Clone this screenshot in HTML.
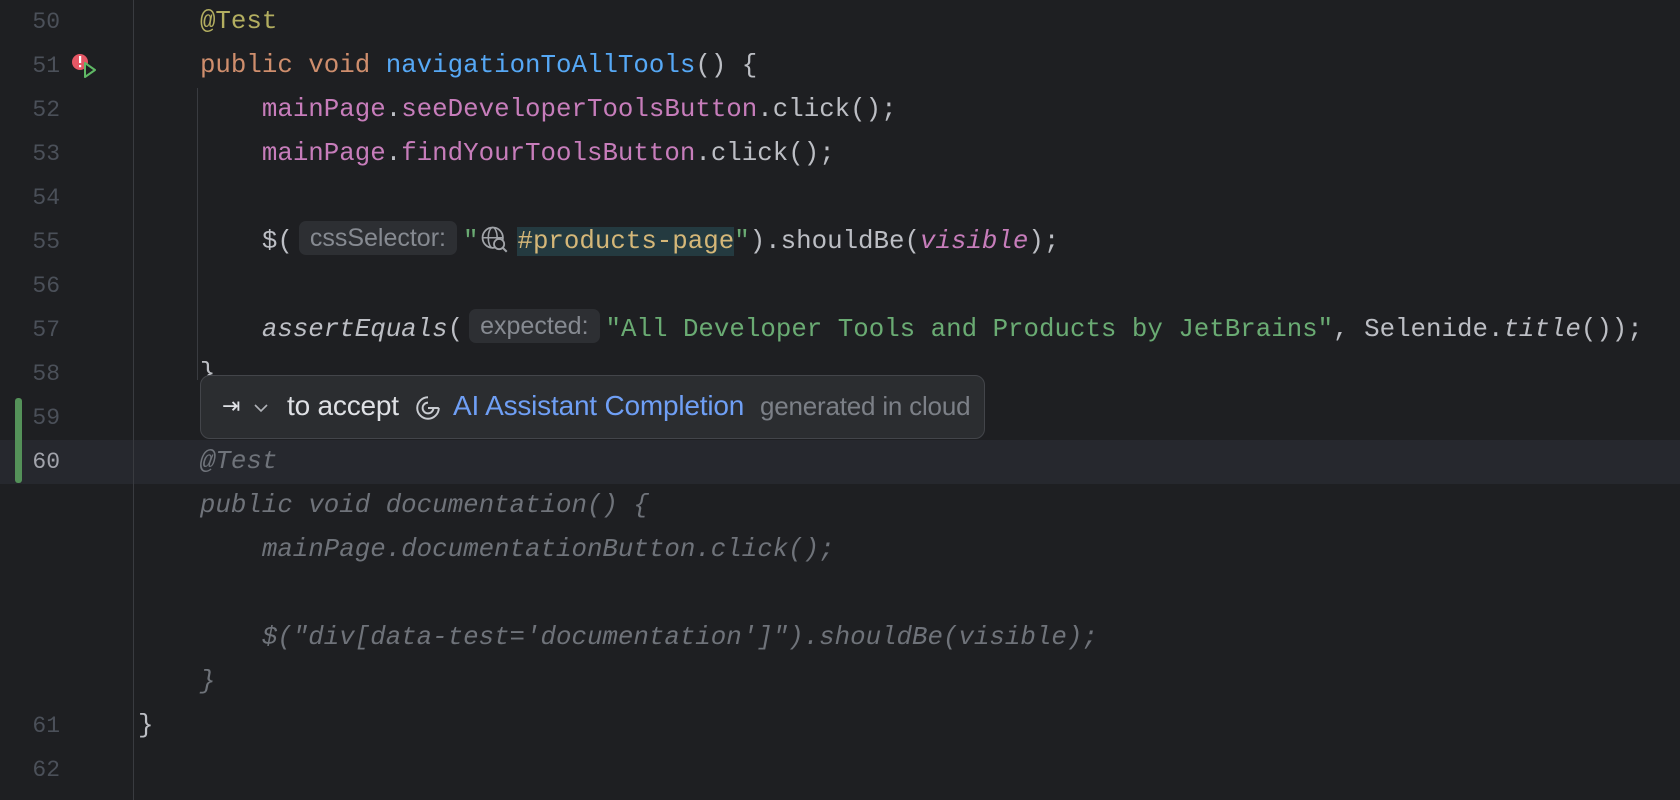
<!DOCTYPE html>
<html><head><meta charset="utf-8"><style>
html,body{margin:0;padding:0;width:1680px;height:800px;overflow:hidden;background:#1e1f22}
.ln{position:absolute;left:0;width:60px;text-align:right;font:23px "Liberation Mono",monospace;color:#4b5059;line-height:44px}
.row{position:absolute;left:138px;white-space:pre;font:25.8px "Liberation Mono",monospace;color:#bcbec4;line-height:44px}
.k{color:#cf8e6d}.m{color:#56a8f5}.f{color:#c77dbb}.a{color:#b3ae60}.s{color:#6aab73}.i{font-style:italic}
.g{color:#6f737a;font-style:italic}
.hint{display:inline-block;background:#2d2f33;color:#868a91;font:25px "Liberation Sans",sans-serif;border-radius:7px;padding:0 11px;line-height:34px;vertical-align:2px;margin:0 6px}
.sel{background:#243a40;color:#d5b778}
</style></head><body>
<div style="position:absolute;left:0;top:440px;width:1680px;height:44px;background:#26282e"></div>
<div style="position:absolute;left:133px;top:0;width:1px;height:800px;background:#393b40"></div>
<div style="position:absolute;left:15px;top:398px;width:7px;height:85px;background:#549159;border-radius:3px"></div>
<div style="position:absolute;left:197px;top:88px;width:1px;height:292px;background:#393b40"></div>

<div class="ln" style="top:0">50</div>
<div class="ln" style="top:44px">51</div>
<div class="ln" style="top:88px">52</div>
<div class="ln" style="top:132px">53</div>
<div class="ln" style="top:176px">54</div>
<div class="ln" style="top:220px">55</div>
<div class="ln" style="top:264px">56</div>
<div class="ln" style="top:308px">57</div>
<div class="ln" style="top:352px">58</div>
<div class="ln" style="top:396px">59</div>
<div class="ln" style="top:440px;color:#a1a3ab">60</div>
<div class="ln" style="top:704px">61</div>
<div class="ln" style="top:748px">62</div>

<svg style="position:absolute;left:70px;top:52px" width="32" height="30" viewBox="0 0 32 30">
<circle cx="10" cy="10" r="8" fill="#e55765"/><rect x="9" y="4" width="2.2" height="7" fill="#fff"/><rect x="9" y="13" width="2.2" height="2.2" fill="#fff"/>
<path d="M15 11 L25 18 L15 25 Z" fill="#1e1f22" stroke="#5fb865" stroke-width="2" stroke-linejoin="round"/>
</svg>

<div class="row" style="top:0">    <span class="a">@Test</span></div>
<div class="row" style="top:44px">    <span class="k">public void </span><span class="m">navigationToAllTools</span>() {</div>
<div class="row" style="top:88px">        <span class="f">mainPage</span>.<span class="f">seeDeveloperToolsButton</span>.click();</div>
<div class="row" style="top:132px">        <span class="f">mainPage</span>.<span class="f">findYourToolsButton</span>.click();</div>
<div class="row" style="top:220px">        $(<span class="hint">cssSelector:</span><span class="s">"</span><svg width="28" height="28" viewBox="0 0 22 22" style="vertical-align:-5px;margin:0 9px 0 2px"><circle cx="10" cy="10" r="8" fill="none" stroke="#a0a3a8" stroke-width="1.4"/><ellipse cx="10" cy="10" rx="3.5" ry="8" fill="none" stroke="#a0a3a8" stroke-width="1.2"/><path d="M2 10H18" stroke="#a0a3a8" stroke-width="1.2"/><circle cx="15" cy="15" r="4" fill="#1e1f22" stroke="#a0a3a8" stroke-width="1.4"/><path d="M18 18L21 21" stroke="#a0a3a8" stroke-width="1.6"/></svg><span class="sel">#products-page</span><span class="s">"</span>).shouldBe(<span class="f i">visible</span>);</div>
<div class="row" style="top:308px">        <span class="i">assertEquals</span>(<span class="hint">expected:</span><span class="s">"All Developer Tools and Products by JetBrains"</span>, Selenide.<span class="i">title</span>());</div>
<div class="row" style="top:352px">    }</div>
<div class="row g" style="top:440px">    @Test</div>
<div class="row g" style="top:484px">    public void documentation() {</div>
<div class="row g" style="top:528px">        mainPage.documentationButton.click();</div>
<div class="row g" style="top:616px">        $("div[data-test='documentation']").shouldBe(visible);</div>
<div class="row g" style="top:660px">    }</div>
<div class="row" style="top:704px">}</div>

<div style="position:absolute;left:200px;top:375px;width:785px;height:64px;background:#2b2d30;border:1px solid #43454a;border-radius:10px;box-sizing:border-box;font:28px 'Liberation Sans',sans-serif;line-height:60px;white-space:nowrap;color:#dfe1e5">
<span style="position:absolute;left:21px;font-size:22px">⇥</span>
<svg style="position:absolute;left:52px;top:27px" width="16" height="10" viewBox="0 0 16 10"><path d="M2 2L8 8L14 2" fill="none" stroke="#b0b3b8" stroke-width="1.6"/></svg>
<span style="position:absolute;left:86px;letter-spacing:-0.2px">to accept</span>
<svg style="position:absolute;left:213px;top:18px" width="28" height="28" viewBox="0 0 26 26"><path d="M13 3A10 10 0 1 0 23 13M13 8A5 5 0 1 0 18 13M13 13L23 13" fill="none" stroke="#c9ccd1" stroke-width="1.8"/></svg>
<span style="position:absolute;left:252px;color:#6f9ff5;letter-spacing:-0.2px">AI Assistant Completion</span>
<span style="position:absolute;left:559px;color:#7c8087;font-size:26px;letter-spacing:-0.2px">generated in cloud</span>
</div>
</body></html>
